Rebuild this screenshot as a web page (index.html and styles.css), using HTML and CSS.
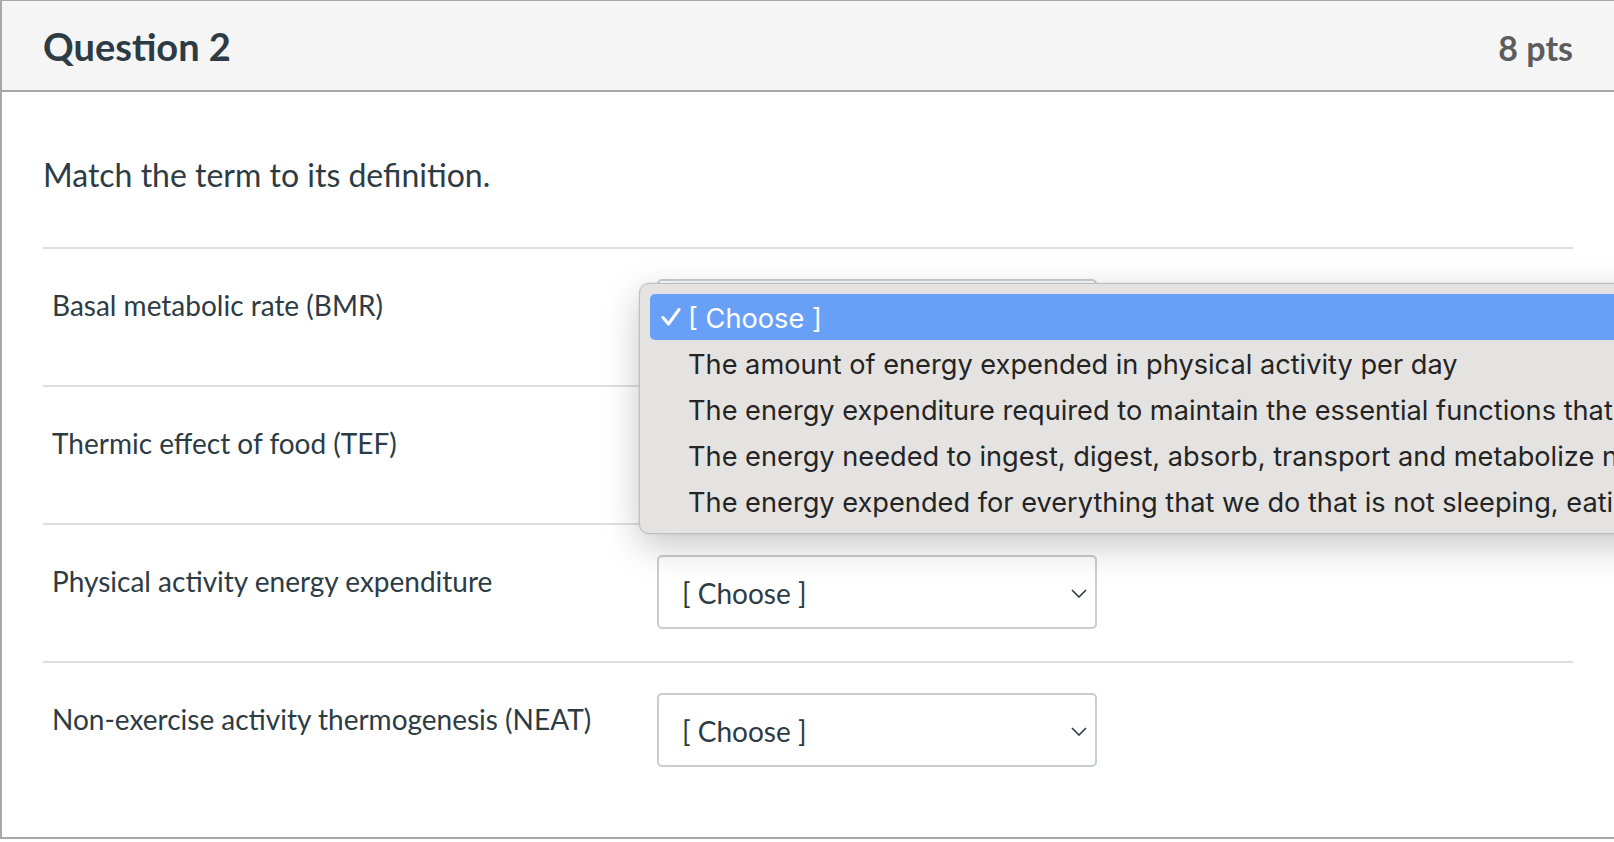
FILE: index.html
```html
<!DOCTYPE html>
<html lang="en">
<head>
<meta charset="utf-8">
<title>Question 2</title>
<link rel="stylesheet" href="styles.css">
</head>
<body>
<div class="question">
  <div class="q-header">
    <h2 class="q-name">Question 2</h2>
    <span class="q-pts">8 pts</span>
  </div>
  <div class="q-body">
    <p class="q-text">Match the term to its definition.</p>
    <div class="matches">
      <div class="match-row">
        <div class="term">Basal metabolic rate (BMR)</div>
        <div class="answer">
          <div class="select"><span class="select-value">[ Choose ]</span><svg class="chev" viewBox="0 0 16 9" width="16" height="9"><polyline points="1,1 8,8 15,1" fill="none" stroke="#2d3b45" stroke-width="1.6"/></svg></div>
          <div class="menu">
            <div class="menu-item active"><svg class="check" viewBox="0 0 20 18" width="20" height="18"><polyline points="2,9.5 7.5,16 18,1.5" fill="none" stroke="#fff" stroke-width="3" stroke-linecap="round" stroke-linejoin="round"/></svg><span>[ Choose ]</span></div>
            <div class="menu-item"><span>The amount of energy expended in physical activity per day</span></div>
            <div class="menu-item"><span>The energy expenditure required to maintain the essential functions that sustain life</span></div>
            <div class="menu-item"><span>The energy needed to ingest, digest, absorb, transport and metabolize nutrients</span></div>
            <div class="menu-item"><span>The energy expended for everything that we do that is not sleeping, eating or sports-like exercise</span></div>
          </div>
        </div>
      </div>
      <div class="match-row">
        <div class="term">Thermic effect of food (TEF)</div>
        <div class="answer">
          <div class="select"><span class="select-value">[ Choose ]</span><svg class="chev" viewBox="0 0 16 9" width="16" height="9"><polyline points="1,1 8,8 15,1" fill="none" stroke="#2d3b45" stroke-width="1.6"/></svg></div>
        </div>
      </div>
      <div class="match-row">
        <div class="term">Physical activity energy expenditure</div>
        <div class="answer">
          <div class="select"><span class="select-value">[ Choose ]</span><svg class="chev" viewBox="0 0 16 9" width="16" height="9"><polyline points="1,1 8,8 15,1" fill="none" stroke="#2d3b45" stroke-width="1.6"/></svg></div>
        </div>
      </div>
      <div class="match-row">
        <div class="term">Non-exercise activity thermogenesis (NEAT)</div>
        <div class="answer">
          <div class="select"><span class="select-value">[ Choose ]</span><svg class="chev" viewBox="0 0 16 9" width="16" height="9"><polyline points="1,1 8,8 15,1" fill="none" stroke="#2d3b45" stroke-width="1.6"/></svg></div>
        </div>
      </div>
    </div>
  </div>
</div>
</body>
</html>
```

FILE: styles.css
```css
html, body {
  margin: 0;
  padding: 0;
  background: #ffffff;
  overflow: hidden;
}

body {
  font-family: Lato, "Liberation Sans", sans-serif;
  color: #2d3b45;
  width: 1614px;
  height: 842px;
}

.question {
  border: 2px solid #a8a8a8;
  border-top-width: 1px;
  border-right: none;
  background: #ffffff;
}

.q-header {
  display: flex;
  justify-content: space-between;
  align-items: baseline;
  background: #f5f5f5;
  border-bottom: 2px solid #a6a6a6;
  padding: 21px 41px 20px 41px;
  height: 48px;
}

.q-name {
  margin: 0;
  font-size: 38px;
  line-height: 48px;
  font-weight: 700;
  color: #2d3b45;
}

.q-pts {
  font-size: 34px;
  line-height: 48px;
  font-weight: 700;
  color: #5c5c5c;
}

.q-body {
  padding: 0 41px 38px 41px;
}

.q-text {
  margin: 61px 0 50px 0;
  font-size: 32px;
  line-height: 44px;
}

.match-row {
  display: flex;
  align-items: flex-start;
  border-top: 2px solid #dedede;
  padding: 30px 0 32px 0;
  height: 74px;
}

.term {
  width: 605px;
  padding-left: 9px;
  margin-top: 8px;
  font-size: 28px;
  line-height: 36px;
}

.answer {
  position: relative;
}

.select {
  box-sizing: border-box;
  width: 440px;
  height: 74px;
  border: 2px solid #c7cdd1;
  border-radius: 5px;
  background: #ffffff;
  display: flex;
  align-items: center;
  justify-content: space-between;
  padding: 2px 8px 0 23px;
}

.select-value {
  font-size: 28px;
  line-height: 36px;
  color: #2d3b45;
}

.chev {
  display: block;
}

.menu {
  position: absolute;
  left: -18px;
  top: 4px;
  width: 1100px;
  box-sizing: border-box;
  padding: 10px 10px 9px 10px;
  background: #e4e3e2;
  border: 1px solid #bfbfbf;
  border-radius: 10px;
  box-shadow: 0 12px 36px rgba(0, 0, 0, 0.22), 0 0 2px rgba(0, 0, 0, 0.15);
  font-family: Inter, "Noto Sans", sans-serif;
  z-index: 10;
}

.menu-item {
  position: relative;
  height: 46px;
  display: flex;
  align-items: center;
  padding-left: 38px;
  padding-top: 2px;
  box-sizing: border-box;
  font-size: 27.2px;
  color: #242424;
  white-space: nowrap;
  border-radius: 5px;
}

.menu-item.active {
  background: #69a0f7;
  color: #ffffff;
}

.check {
  position: absolute;
  left: 11px;
  top: 14px;
}
```
